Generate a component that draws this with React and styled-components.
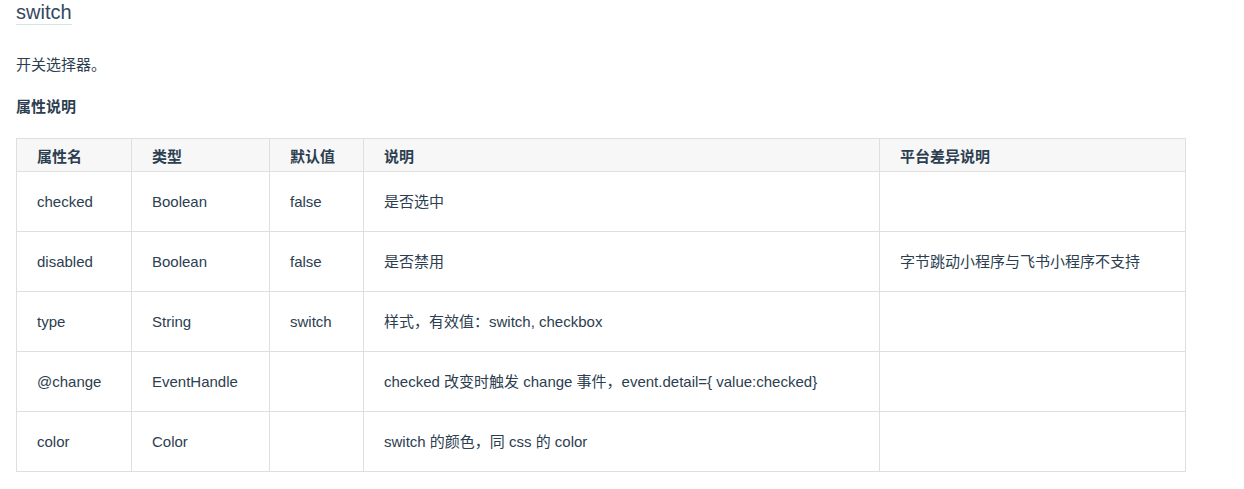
import React from 'react';
import styled, { createGlobalStyle } from 'styled-components';

const GlobalStyle = createGlobalStyle`
    body {
        margin: 0;
        background: #fff;
        font-family: "Liberation Sans", "Noto Sans CJK SC", sans-serif;
        color: #2c3e50;
        font-size: 15px;
    }
`

const Page = styled.div`
    display: flex;
    flex-direction: column;
    align-items: flex-start;
    padding: 0 16px;
`

const Title = styled.h2`
    margin: 0;
    font-size: 20px;
    font-weight: 400;
    line-height: 24px;
    border-bottom: 1px solid #cfe9e2;
    color: #34495e;
`

const Intro = styled.p`
    margin: 30px 0 0;
    line-height: 20px;
`

const SubTitle = styled.h4`
    margin: 22px 0 0;
    font-size: 15px;
    font-weight: 700;
    line-height: 20px;
`

const Table = styled.table`
    margin-top: 21px;
    border-collapse: collapse;
    width: 1169px;
    table-layout: fixed;
`

const Th = styled.th`
    width: ${props => props.w}px;
    height: 33px;
    padding: 0 20px;
    text-align: left;
    font-weight: 700;
    background: #f7f7f7;
    border: 1px solid #dfdfdf;
    box-sizing: border-box;
`

const Td = styled.td`
    height: 59px;
    padding: 0 20px;
    border: 1px solid #dfdfdf;
    line-height: 20px;
    vertical-align: middle;
`

const columns = [
    { label: '属性名', w: 115 },
    { label: '类型', w: 138 },
    { label: '默认值', w: 94 },
    { label: '说明', w: 516 },
    { label: '平台差异说明', w: 306 },
]

const rows = [
    ['checked', 'Boolean', 'false', '是否选中', ''],
    ['disabled', 'Boolean', 'false', '是否禁用', '字节跳动小程序与飞书小程序不支持'],
    ['type', 'String', 'switch', '样式，有效值：switch, checkbox', ''],
    ['@change', 'EventHandle', '', 'checked 改变时触发 change 事件，event.detail={ value:checked}', ''],
    ['color', 'Color', '', 'switch 的颜色，同 css 的 color', ''],
]

export default function App() {
    return (
        <Page>
            <GlobalStyle />
            <Title>switch</Title>
            <Intro>开关选择器。</Intro>
            <SubTitle>属性说明</SubTitle>
            <Table>
                <thead>
                    <tr>
                        {columns.map((col) => (
                            <Th key={col.label} w={col.w}>{col.label}</Th>
                        ))}
                    </tr>
                </thead>
                <tbody>
                    {rows.map((row) => (
                        <tr key={row[0]}>
                            {row.map((cell, i) => (
                                <Td key={i}>{cell}</Td>
                            ))}
                        </tr>
                    ))}
                </tbody>
            </Table>
        </Page>
    );
}
